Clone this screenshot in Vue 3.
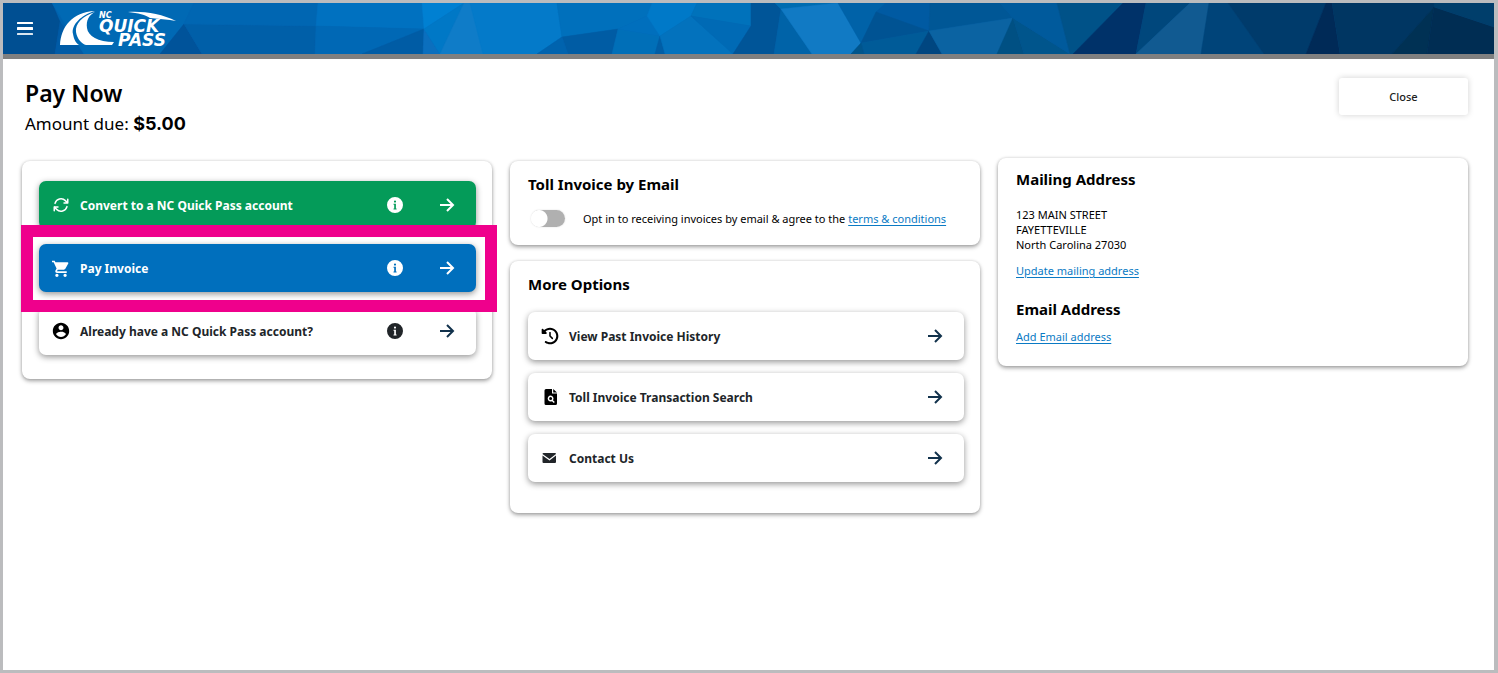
<script setup>
import { ref } from 'vue'

const optIn = ref(false)

const facets = [
  ['3,3 52,3 60,22 55,54 3,54', '#004f92'],
  ['60,22 84,54 55,54', '#005ba6'],
  ['52,3 194,3 184,24 160,54 84,54', '#0069b4'],
  ['184,24 202,54 160,54', '#00539a'],
  ['184,24 316,26 315,54 202,54', '#005fa8'],
  ['194,3 320,3 316,26 184,24', '#0066b2'],
  ['318,3 422,3 424,29 316,26', '#0071c0'],
  ['316,26 424,29 362,54 315,54', '#0068b5'],
  ['424,29 423,54 362,54', '#005ca5'],
  ['422,3 464,3 424,29', '#0080d2'],
  ['424,29 440,54 423,54', '#0b6fbe'],
  ['464,3 424,29 440,54', '#0078c6'],
  ['464,3 500,3 500,54 440,54', '#0f7cc8'],
  ['470,3 557,3 562,37 537,54 483,54', '#047ac9'],
  ['557,3 652,3 647,16 618,29 562,37', '#0070bc'],
  ['562,37 618,29 612,54 568,54', '#005ca4'],
  ['562,37 568,54 537,54', '#0063ae'],
  ['618,29 660,36 655,54 612,54', '#006fb8'],
  ['618,29 647,16 660,36', '#006fbd'],
  ['652,3 697,3 691,16 660,36 647,16', '#0079c8'],
  ['660,36 665,54 655,54', '#005ea6'],
  ['660,36 691,16 734,54 665,54', '#0372bd'],
  ['697,3 751,3 751,26 691,16', '#0072bb'],
  ['691,16 751,26 733,54', '#006ab5'],
  ['751,3 775,3 781,9 774,54 733,54 751,26', '#005598'],
  ['775,3 838,3 781,9', '#006cb0'],
  ['781,9 812,54 774,54', '#0063a8'],
  ['781,9 838,3 861,43 851,54 812,54', '#117ac4'],
  ['838,3 886,3 876,12 861,43', '#0062a8'],
  ['886,3 930,3 929,31 876,12', '#005aa2'],
  ['876,12 929,31 861,43', '#005393'],
  ['861,43 929,31 916,54 864,54', '#005b98'],
  ['861,43 864,54 851,54', '#00558c'],
  ['929,31 942,54 916,54', '#004680'],
  ['930,3 1000,3 1013,18 929,31', '#005796'],
  ['929,31 1013,18 997,54 942,54', '#0b63a2'],
  ['1013,18 1024,54 997,54', '#005083'],
  ['1013,18 1070,54 1024,54', '#00558c'],
  ['1000,3 1057,3 1070,54 1013,18', '#005a9c'],
  ['1057,3 1123,3 1073,54 1070,54', '#005288'],
  ['1123,3 1146,3 1136,54 1073,54', '#003269'],
  ['1146,3 1190,3 1136,54', '#00477c'],
  ['1190,3 1209,3 1201,54 1136,54', '#115a91'],
  ['1209,3 1228,3 1264,54 1201,54', '#004479'],
  ['1228,3 1326,3 1306,54 1264,54', '#003b6b'],
  ['1326,3 1332,3 1340,54 1306,54', '#002a57'],
  ['1332,3 1434,3 1434,7 1392,54 1340,54', '#003662'],
  ['1434,7 1427,54 1392,54', '#003154'],
  ['1434,7 1494,27 1494,54 1427,54', '#002d53'],
  ['1434,3 1494,3 1494,27 1434,7', '#003e6b'],
]

const icons = {
  cart: {
    box: '1 0 22 22',
    d: 'M7 18c-1.1 0-1.99.9-1.99 2S5.9 22 7 22s2-.9 2-2-.9-2-2-2zM1 2v2h2l3.6 7.59-1.35 2.45c-.16.28-.25.61-.25.96 0 1.1.9 2 2 2h12v-2H7.42c-.14 0-.25-.11-.25-.25l.03-.12.9-1.63h7.45c.75 0 1.41-.41 1.75-1.03l3.58-6.49c.08-.14.12-.31.12-.48 0-.55-.45-1-1-1H5.21l-.94-2H1zm16 16c-1.1 0-1.99.9-1.99 2s.89 2 1.99 2 2-.9 2-2-.9-2-2-2z',
  },
  account: {
    box: '1 1 22 22',
    d: 'M12 2C6.48 2 2 6.48 2 12s4.48 10 10 10 10-4.48 10-10S17.52 2 12 2zm0 3c1.66 0 3 1.34 3 3s-1.34 3-3 3-3-1.34-3-3 1.34-3 3-3zm0 14.2c-2.5 0-4.71-1.28-6-3.22.03-1.99 4-3.08 6-3.08 1.99 0 5.97 1.09 6 3.08-1.29 1.94-3.5 3.22-6 3.22z',
  },
  convert: {
    box: '0 0 24 24',
    line: true,
    d: 'M16.023 9.348h4.992v-.001M2.985 19.644v-4.992m0 0h4.992m-4.993 0 3.181 3.183a8.25 8.25 0 0 0 13.803-3.7M4.031 9.865a8.25 8.25 0 0 1 13.803-3.7l3.181 3.182m0-4.991v4.99',
  },
  history: {
    box: '-20 -20 552 552',
    d: 'M75 75L41 41C25.9 25.9 0 36.6 0 57.9V168c0 13.3 10.7 24 24 24H134.1c21.4 0 32.1-25.9 17-41l-30.8-30.8C155 85.5 203 64 256 64c106 0 192 86 192 192s-86 192-192 192c-40.8 0-78.6-12.7-109.7-34.4c-14.5-10.1-34.4-6.6-44.6 7.9s-6.6 34.4 7.9 44.6C151.2 495 201.7 512 256 512c141.4 0 256-114.6 256-256S397.4 0 256 0C185.3 0 121.3 28.7 75 75zm181 53c-13.3 0-24 10.7-24 24V256c0 6.4 2.5 12.5 7 17l72 72c9.4 9.4 24.6 9.4 33.9 0s9.4-24.6 0-33.9l-65-65V152c0-13.3-10.7-24-24-24z',
  },
  search: {
    box: '0 0 18 18',
    d: 'M5 1H11V5.500H16V15.500A1.500 1.500 0 0 1 14.500 17H5A1.500 1.500 0 0 1 3.500 15.500V2.500A1.500 1.500 0 0 1 5 1ZM12.200 1L16 4.500H12.200ZM9.600 7.500A3 3 0 1 0 11 13.200L12.800 15L13.800 14L12 12.200A3 3 0 0 0 9.600 7.500ZM9.600 9A1.500 1.500 0 1 1 9.600 12A1.500 1.500 0 1 1 9.600 9Z',
  },
  mail: {
    box: '0 0 18 18',
    tone: 'soft',
    d: 'M2.500 4H14A1 1 0 0 1 15 5L8.500 10L1.500 5A1 1 0 0 1 2.500 4ZM1.500 6.500L8.500 11.500L15 6.500V13A1 1 0 0 1 14 14H2.500A1 1 0 0 1 1.500 13Z',
  },
}

const payOptions = [
  { label: 'Convert to a NC Quick Pass account', icon: 'convert', tone: 'green', marked: false },
  { label: 'Pay Invoice', icon: 'cart', tone: 'blue', marked: true },
  { label: 'Already have a NC Quick Pass account?', icon: 'account', tone: 'plain', marked: false },
]

const moreOptions = [
  { label: 'View Past Invoice History', icon: 'history' },
  { label: 'Toll Invoice Transaction Search', icon: 'search' },
  { label: 'Contact Us', icon: 'mail' },
]
</script>

<template>
  <div class="page">
    <header class="topbar">
      <svg class="facets" viewBox="3 3 1491 51" preserveAspectRatio="none" aria-hidden="true">
        <polygon v-for="f in facets" :key="f[0]" :points="f[0]" :fill="f[1]" :stroke="f[1]" stroke-width="0.500" />
      </svg>
      <button class="menu" type="button" aria-label="Menu">
        <svg viewBox="0 0 16 14" width="16" height="14" fill="#fff">
          <rect width="16" height="2" rx="0.500" />
          <rect y="5" width="16" height="3" rx="0.500" />
          <rect y="11" width="16" height="2" rx="0.500" opacity="0.850" />
        </svg>
      </button>
      <a class="logo" href="#">
        <svg viewBox="58 8 124 42" width="124" height="42" fill="#fff">
          <path d="M60 45C61 27 72 12 95 11C81 15 71 25 73 34C74 40 76 43 79 45Z" />
          <path d="M95 12C82 16 75 24 76 32C77 39 82 44 86 45H112L114 42C98 42 88 36 87 28C86 20 89 15 95 12Z" />
          <path d="M128 12C144 11 162 14 176 21L170 20L160 19L150 18C146 15 138 13 128 12Z" />
          <text x="99" y="18" class="logo-small">NC</text>
          <text x="99" y="32" class="logo-word">QUICK</text>
          <text x="118" y="46" class="logo-word">PASS</text>
        </svg>
      </a>
    </header>

    <div class="page-head">
      <div>
        <h1>Pay Now</h1>
        <p class="due">Amount due: <strong>$5.00</strong></p>
      </div>
      <button class="close" type="button">Close</button>
    </div>

    <main class="columns">
      <section class="column inset">
        <div class="card pay-card">
          <div v-for="o in payOptions" :key="o.label" class="slot" :class="{ marked: o.marked }">
            <button type="button" class="option" :class="o.tone">
              <svg class="icon" :class="{ line: icons[o.icon].line }" :viewBox="icons[o.icon].box" aria-hidden="true">
                <path :d="icons[o.icon].d" />
              </svg>
              <span class="label">{{ o.label }}</span>
              <svg class="info" viewBox="0 0 16 16" fill-rule="evenodd" role="img" aria-label="More information">
                <path d="M8 0A8 8 0 1 1 8 16A8 8 0 1 1 8 0ZM8 3.500A1.100 1.100 0 1 0 8 5.700A1.100 1.100 0 1 0 8 3.500ZM6.500 6.800V7.800H7.200V11.500H6.500V12.500H9.600V11.500H8.900V6.800Z" />
              </svg>
              <svg class="arrow" viewBox="0 0 16 16" aria-hidden="true"><path d="M1 8H14M8 2L14 8L8 14" /></svg>
            </button>
          </div>
        </div>
      </section>

      <section class="column inset">
        <div class="card email-card">
          <h2>Toll Invoice by Email</h2>
          <div class="opt-in">
            <input id="opt-in" v-model="optIn" type="checkbox" role="switch" class="switch" />
            <span><label for="opt-in">Opt in to receiving invoices by email &amp; agree to the</label> <a href="#">terms &amp; conditions</a></span>
          </div>
        </div>
        <div class="card more-card">
          <h2>More Options</h2>
          <div class="stack">
            <button v-for="o in moreOptions" :key="o.label" type="button" class="option plain">
              <svg class="icon" :class="icons[o.icon].tone" :viewBox="icons[o.icon].box" fill-rule="evenodd" aria-hidden="true">
                <path :d="icons[o.icon].d" />
              </svg>
              <span class="label">{{ o.label }}</span>
              <svg class="arrow" viewBox="0 0 16 16" aria-hidden="true"><path d="M1 8H14M8 2L14 8L8 14" /></svg>
            </button>
          </div>
        </div>
      </section>

      <section class="column">
        <div class="card address-card">
          <h2>Mailing Address</h2>
          <address>123 MAIN STREET<br />FAYETTEVILLE<br />North Carolina 27030</address>
          <a href="#">Update mailing address</a>
          <h2 class="second">Email Address</h2>
          <a href="#">Add Email address</a>
        </div>
      </section>
    </main>
  </div>
</template>

<style>
body {
  margin: 0;
}
</style>

<style scoped>
.page {
  box-sizing: border-box;
  min-height: 100vh;
  border: 3px solid #bbbcbe;
  border-right-width: 4px;
  background: #fff;
  color: #000;
  font-family: "Noto Sans", "Open Sans", sans-serif;
  font-size: 11px;
  line-height: 15px;
}

button {
  font: inherit;
  border: 0;
  margin: 0;
  cursor: pointer;
}

.topbar {
  position: relative;
  display: flex;
  align-items: center;
  height: 51px;
  border-bottom: 5px solid #808080;
  background: #0063ae;
}

.facets {
  position: absolute;
  inset: 0;
  width: 100%;
  height: 100%;
}

.menu {
  position: relative;
  display: flex;
  margin-left: 14px;
  padding: 0;
  background: none;
}

.logo {
  position: relative;
  display: flex;
  margin-left: 25px;
}

.logo-small,
.logo-word {
  font-family: "DejaVu Sans", sans-serif;
  font-weight: 700;
  font-style: italic;
}

.logo-small {
  font-size: 8px;
}

.logo-word {
  font-size: 17px;
}

.page-head {
  display: flex;
  justify-content: space-between;
  align-items: flex-start;
  padding: 19px 26px 18px 22px;
}

h1 {
  margin: 0;
  font-size: 23px;
  font-weight: 600;
  line-height: 30px;
}

.due {
  margin: 0;
  font-size: 17px;
  line-height: 32px;
}

.due strong {
  font-family: Inter, sans-serif;
  font-size: 18px;
  line-height: 20px;
}

.close {
  width: 129px;
  height: 37px;
  border-radius: 3px;
  background: #fff;
  box-shadow: 0 0 6px rgba(0, 0, 0, 0.18);
  color: #222;
  font-weight: 500;
}

.columns {
  display: grid;
  grid-template-columns: repeat(3, minmax(0, 1fr));
  align-items: start;
  gap: 18px;
  padding: 0 26px 24px 19px;
}

.column {
  display: flex;
  flex-direction: column;
  gap: 16px;
}

.inset {
  padding-top: 3px;
}

.card {
  border-radius: 8px;
  background: #fff;
  box-shadow: 0 2px 4px rgba(0, 0, 0, 0.36), 0 0 3px rgba(0, 0, 0, 0.12);
}

h2 {
  margin: 0;
  font-size: 15px;
  font-weight: 700;
  line-height: 20px;
}

a {
  color: #0a7ac4;
  text-underline-offset: 2px;
}

.pay-card {
  display: flex;
  flex-direction: column;
  gap: 15px;
  padding: 20px 16px 24px 17px;
}

.slot {
  position: relative;
}

.marked::after {
  content: "";
  position: absolute;
  inset: -19px -21px -20px -18px;
  border: 12px solid #ef008c;
  pointer-events: none;
}

.marked {
  z-index: 1;
}

.option {
  display: flex;
  align-items: center;
  width: 100%;
  height: 48px;
  padding: 0 21px 0 12px;
  border-radius: 7px;
  box-shadow: 0 2px 6px rgba(0, 0, 0, 0.42);
  font-size: 12px;
  font-weight: 700;
  text-align: left;
}

.green {
  background: #049b59;
  color: #fff;
}

.blue {
  background: #006fbd;
  color: #fff;
}

.plain {
  background: #fff;
  color: #212529;
}

.label {
  flex: 1;
  margin-left: 10px;
}

.icon {
  width: 18px;
  height: 18px;
  margin-left: 1px;
  fill: currentColor;
}

.plain .icon {
  color: #000;
}

.plain .icon.soft {
  color: #212529;
}

.icon.line {
  fill: none;
  stroke: currentColor;
  stroke-width: 2;
  stroke-linecap: round;
  stroke-linejoin: round;
}

.info {
  width: 16px;
  height: 16px;
  margin-right: 36px;
  fill: currentColor;
}

.arrow {
  width: 16px;
  height: 16px;
  fill: none;
  stroke: currentColor;
  stroke-width: 2;
}

.plain .arrow {
  color: #12324c;
}

.email-card {
  padding: 13px 18px 17px;
}

.opt-in {
  display: flex;
  align-items: center;
  gap: 18px;
  height: 20px;
  margin-top: 14px;
}

.switch {
  appearance: none;
  flex: none;
  width: 34px;
  height: 17px;
  margin: 0 0 0 3px;
  border-radius: 9px;
  background: radial-gradient(circle at 8px 50%, #fff 8px, #b0b0b0 9px);
  box-shadow: 0 0 2px rgba(0, 0, 0, 0.14);
}

.switch:checked {
  background: radial-gradient(circle at 26px 50%, #fff 8px, #006fbd 9px);
}

.more-card {
  padding: 13px 16px 31px 18px;
}

.stack {
  display: flex;
  flex-direction: column;
  gap: 13px;
  margin-top: 18px;
}

.address-card {
  padding: 11px 18px 22px;
}

address {
  margin: 18px 0 11px;
  font-style: normal;
}

.address-card > a {
  display: table;
}

.second {
  margin: 21px 0 10px;
}
</style>
